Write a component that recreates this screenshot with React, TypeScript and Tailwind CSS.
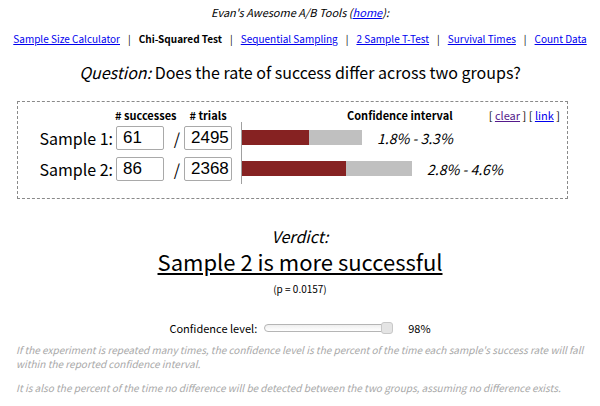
import React from "react";

const font = { fontFamily: '"Noto Sans CJK KR", "Noto Sans", sans-serif' };

function NumInput({ value }: { value: string }) {
  return (
    <div
      className="w-[48px] h-[24px] border border-[#a9a9a9] rounded-[2px] flex items-center pl-[6px] text-[17px] leading-none text-black"
      style={{ fontFamily: '"Liberation Sans", Arial, sans-serif' }}
    >
      {value}
    </div>
  );
}

const rows = [
  { label: "Sample 1:", s: "61", t: "2495", red: 67, gray: 53, ci: "1.8% - 3.3%" },
  { label: "Sample 2:", s: "86", t: "2368", red: 104, gray: 66, ci: "2.8% - 4.6%" },
];

function Sep() {
  return <span className="text-black">|</span>;
}

export default function App() {
  return (
    <div className="w-[600px] h-[406px] bg-white text-black overflow-hidden" style={font}>
      <p className="text-center italic text-[11px] leading-[14px] pt-[5px] whitespace-nowrap">
        Evan's Awesome A/B Tools (<a className="text-[#0000ee] underline">home</a>):
      </p>
      <nav className="flex justify-center items-center gap-[8px] text-[10px] leading-[16px] mt-[12px] whitespace-nowrap">
        <a className="text-[#0000ee] underline">Sample Size Calculator</a>
        <Sep />
        <span className="font-bold">Chi-Squared Test</span>
        <Sep />
        <a className="text-[#0000ee] underline">Sequential Sampling</a>
        <Sep />
        <a className="text-[#0000ee] underline">2 Sample T-Test</a>
        <Sep />
        <a className="text-[#0000ee] underline">Survival Times</a>
        <Sep />
        <a className="text-[#0000ee] underline">Count Data</a>
      </nav>
      <p className="text-center text-[16px] leading-[22px] mt-[14px] whitespace-nowrap">
        <i>Question:</i> Does the rate of success differ across two groups?
      </p>

      <div className="ml-[17px] mt-[18px] w-[551px] h-[98px] border border-dashed border-[#8a8a8a]">
        <div className="grid grid-cols-[98px_48px_20px_48px_1fr] h-[20px] items-end text-[11px] leading-[14px] font-bold">
          <div />
          <div className="whitespace-nowrap -ml-[1px]"># successes</div>
          <div />
          <div className="whitespace-nowrap text-center"># trials</div>
          <div className="flex justify-between items-end pl-[115px] pr-[7px] whitespace-nowrap">
            <span>Confidence interval</span>
            <span className="font-normal">
              [ <a className="text-[#551a8b] underline">clear</a> ] [ <a className="text-[#0000ee] underline">link</a> ]
            </span>
          </div>
        </div>
        {rows.map((r) => (
          <div key={r.label} className="grid grid-cols-[98px_48px_20px_48px_1fr] h-[31px] items-center">
            <div className="text-right pr-[3px] text-[16px] leading-none whitespace-nowrap">{r.label}</div>
            <NumInput value={r.s} />
            <div className="text-center text-[16px] leading-none pl-[6px]">/</div>
            <NumInput value={r.t} />
            <div className="h-full ml-[9px] border-l border-[#a0a0a0] flex items-center">
              <div className="flex h-[15px]">
                <div className="bg-[#862222] h-full" style={{ width: r.red }} />
                <div className="bg-[#c0c0c0] h-full" style={{ width: r.gray }} />
              </div>
              <span className="ml-[15px] italic text-[14px] leading-none whitespace-nowrap">{r.ci}</span>
            </div>
          </div>
        ))}
      </div>

      <p className="text-center italic text-[16px] leading-[20px] mt-[27px]">Verdict:</p>
      <p className="text-center text-[22px] leading-[28px] mt-[1px] underline whitespace-nowrap">Sample 2 is more successful</p>
      <p className="text-center text-[10px] leading-[14px] mt-[7px]">(p = 0.0157)</p>

      <div className="flex items-center justify-center text-[11px] leading-[14px] mt-[25px] h-[14px]">
        <span className="whitespace-nowrap">Confidence level:</span>
        <div className="relative ml-[7px] w-[129px] h-[14px] flex items-center">
          <div className="w-full h-[8px] rounded-[4px] border border-[#b5b5b5] bg-gradient-to-b from-[#efefef] to-[#ffffff]" />
          <div className="absolute right-0 top-[1px] w-[12px] h-[12px] rounded-[3px] border border-[#c8c8c8] bg-[#e4e4e4]" />
        </div>
        <span className="ml-[15px]">98%</span>
      </div>

      <div className="px-[16px] mt-[8px] text-[10px] leading-[14px] italic text-[#a8a8a8]">
        <p>
          If the experiment is repeated many times, the confidence level is the percent of the time each sample's success rate will fall within the reported confidence interval.
        </p>
        <p className="mt-[10px]">
          It is also the percent of the time no difference will be detected between the two groups, assuming no difference exists.
        </p>
      </div>
    </div>
  );
}
